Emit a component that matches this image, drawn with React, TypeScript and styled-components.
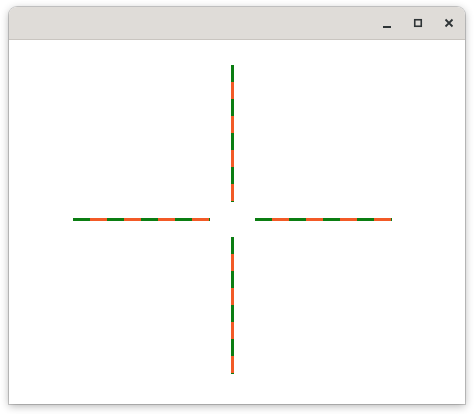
import React from "react";
import styled, { createGlobalStyle } from "styled-components";

const GlobalStyle = createGlobalStyle`
  html, body {
    margin: 0;
    padding: 0;
    background: #ffffff;
    font-family: "Noto Sans", "DejaVu Sans", sans-serif;
  }
`;

const Page = styled.div`
  width: 474px;
  height: 414px;
  padding: 7px 9px 10px 9px;
  box-sizing: border-box;
`;

const Window = styled.div`
  width: 456px;
  height: 397px;
  display: flex;
  flex-direction: column;
  border-radius: 8px 8px 0 0;
  overflow: hidden;
  background: #ffffff;
  box-shadow: 0 0 0 1px rgba(0, 0, 0, 0.18), 0 2px 8px rgba(0, 0, 0, 0.3);
`;

const TitleBar = styled.div`
  height: 33px;
  flex: none;
  display: flex;
  align-items: center;
  justify-content: flex-end;
  gap: 7px;
  padding-right: 4px;
  background: #dfdcd8;
  border-bottom: 1px solid #c9c5c0;
  box-sizing: border-box;
`;

const WinButton = styled.button`
  width: 24px;
  height: 24px;
  padding: 0;
  border: none;
  background: transparent;
  display: flex;
  align-items: center;
  justify-content: center;
  color: #2e3436;
`;

const Canvas = styled.svg`
  flex: 1;
  display: block;
`;

const DASH = 17;

type Seg = { x1: number; y1: number; x2: number; y2: number };

const lines: Seg[] = [
  { x1: 64, y1: 179.5, x2: 201, y2: 179.5 },
  { x1: 246, y1: 179.5, x2: 383, y2: 179.5 },
  { x1: 223.5, y1: 25, x2: 223.5, y2: 162 },
  { x1: 223.5, y1: 197, x2: 223.5, y2: 334 },
];

function DashedLine({ x1, y1, x2, y2 }: Seg) {
  return (
    <g strokeWidth={3} shapeRendering="crispEdges">
      <line
        x1={x1}
        y1={y1}
        x2={x2}
        y2={y2}
        stroke="#f25a26"
        strokeDasharray={`${DASH} ${DASH}`}
        strokeDashoffset={DASH}
      />
      <line
        x1={x1}
        y1={y1}
        x2={x2}
        y2={y2}
        stroke="#0b7d12"
        strokeDasharray={`${DASH} ${DASH}`}
      />
    </g>
  );
}

export default function App() {
  return (
    <>
      <GlobalStyle />
      <Page>
        <Window>
          <TitleBar>
            <WinButton aria-label="minimize">
              <svg width="10" height="10" viewBox="0 0 10 10">
                <rect x="1" y="8" width="8" height="2" fill="currentColor" />
              </svg>
            </WinButton>
            <WinButton aria-label="maximize">
              <svg width="10" height="10" viewBox="0 0 10 10">
                <rect
                  x="1.75"
                  y="1.75"
                  width="6.5"
                  height="6.5"
                  fill="none"
                  stroke="currentColor"
                  strokeWidth="1.6"
                />
              </svg>
            </WinButton>
            <WinButton aria-label="close">
              <svg width="10" height="10" viewBox="0 0 10 10">
                <path
                  d="M1.5 1.5 L8.5 8.5 M8.5 1.5 L1.5 8.5"
                  stroke="currentColor"
                  strokeWidth="1.8"
                />
              </svg>
            </WinButton>
          </TitleBar>
          <Canvas>
            {lines.map((l, i) => (
              <DashedLine key={i} {...l} />
            ))}
          </Canvas>
        </Window>
      </Page>
    </>
  );
}
